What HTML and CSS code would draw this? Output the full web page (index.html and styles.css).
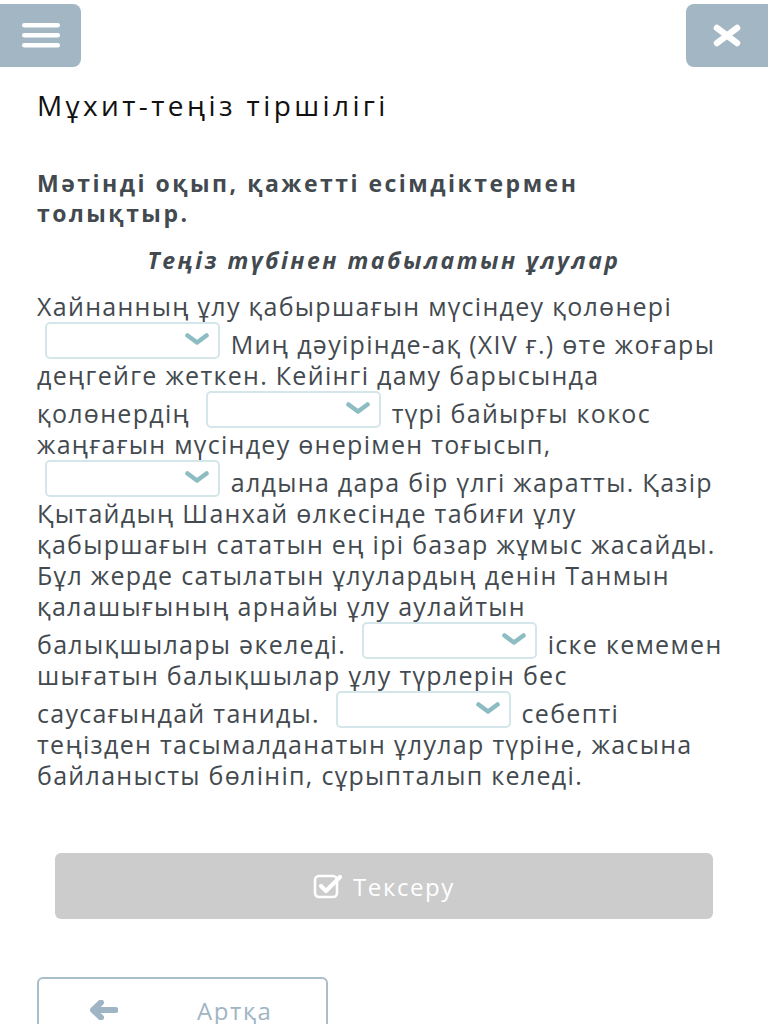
FILE: index.html
```html
<!DOCTYPE html>
<html lang="kk">
<head>
    <meta charset="UTF-8">
    <meta name="viewport" content="width=device-width, initial-scale=1.0">
    <title>Мұхит-теңіз тіршілігі</title>
    <link rel="stylesheet" href="styles.css">
</head>
<body>
    <div class="topbar">
        <button class="icon-btn menu-btn" type="button" aria-label="Мәзір">
            <svg width="38" height="25" viewBox="0 0 38 25">
                <rect x="0" y="0" width="38" height="4.6" rx="2.3" fill="#fff"/>
                <rect x="0" y="10" width="38" height="4.6" rx="2.3" fill="#fff"/>
                <rect x="0" y="20" width="38" height="4.6" rx="2.3" fill="#fff"/>
            </svg>
        </button>
        <button class="icon-btn close-btn" type="button" aria-label="Жабу">
            <svg width="30" height="23" viewBox="0 0 30 23">
                <path d="M5 4 L25 19 M25 4 L5 19" stroke="#fff" stroke-width="6.5" stroke-linecap="round"/>
            </svg>
        </button>
    </div>

    <div class="container">
        <h1 class="title">Мұхит-теңіз тіршілігі</h1>

        <h2 class="task">Мәтінді оқып, қажетті есімдіктермен толықтыр.</h2>

        <h3 class="subtitle">Теңіз түбінен табылатын ұлулар</h3>

        <p class="text">
            Хайнанның ұлу қабыршағын мүсіндеу қолөнері
            <span class="blank"><svg class="chevron" width="26" height="12" viewBox="0 0 26 12"><path d="M3.5 2.5 L13 9.5 L22.5 2.5" fill="none" stroke="#8dbdc3" stroke-width="4.6" stroke-linecap="round" stroke-linejoin="round"/></svg></span>
            Миң дәуірінде-ақ (XIV ғ.) өте жоғары деңгейге жеткен. Кейінгі даму барысында қолөнердің
            <span class="blank"><svg class="chevron" width="26" height="12" viewBox="0 0 26 12"><path d="M3.5 2.5 L13 9.5 L22.5 2.5" fill="none" stroke="#8dbdc3" stroke-width="4.6" stroke-linecap="round" stroke-linejoin="round"/></svg></span>
            түрі байырғы кокос жаңғағын мүсіндеу өнерімен тоғысып,
            <span class="blank"><svg class="chevron" width="26" height="12" viewBox="0 0 26 12"><path d="M3.5 2.5 L13 9.5 L22.5 2.5" fill="none" stroke="#8dbdc3" stroke-width="4.6" stroke-linecap="round" stroke-linejoin="round"/></svg></span>
            алдына дара бір үлгі жаратты. Қазір Қытайдың Шанхай өлкесінде табиғи ұлу қабыршағын сататын ең ірі базар жұмыс жасайды. Бұл жерде сатылатын ұлулардың денін Танмын қалашығының арнайы ұлу аулайтын балықшылары әкеледі.
            <span class="blank"><svg class="chevron" width="26" height="12" viewBox="0 0 26 12"><path d="M3.5 2.5 L13 9.5 L22.5 2.5" fill="none" stroke="#8dbdc3" stroke-width="4.6" stroke-linecap="round" stroke-linejoin="round"/></svg></span>
            іске кемемен шығатын балықшылар ұлу түрлерін бес саусағындай таниды.
            <span class="blank"><svg class="chevron" width="26" height="12" viewBox="0 0 26 12"><path d="M3.5 2.5 L13 9.5 L22.5 2.5" fill="none" stroke="#8dbdc3" stroke-width="4.6" stroke-linecap="round" stroke-linejoin="round"/></svg></span>
            себепті теңізден тасымалданатын ұлулар түріне, жасына байланысты бөлініп, сұрыпталып келеді.
        </p>

        <button class="check-btn" type="button">
            <svg width="30" height="26" viewBox="0 0 30 26">
                <rect x="2" y="3" width="22" height="21" rx="4" fill="none" stroke="#fff" stroke-width="2.6"/>
                <path d="M8 13 L13 18 L27 4" fill="none" stroke="#fff" stroke-width="4.2" stroke-linecap="round" stroke-linejoin="round"/>
            </svg>
            <span>Тексеру</span>
        </button>

        <button class="back-btn" type="button">
            <svg width="28" height="20" viewBox="0 0 28 20">
                <path d="M11 2.5 L3 10 L11 17.5 M4 10 L25.5 10" fill="none" stroke="#a0b5c4" stroke-width="6" stroke-linecap="round" stroke-linejoin="round"/>
            </svg>
            <span>Артқа</span>
        </button>
    </div>
</body>
</html>
```

FILE: styles.css
```css
body {
    font-family: "Open Sans", "Noto Sans", sans-serif;
    background-color: #fff;
    color: #434a4f;
    margin: 0;
    padding: 0;
}
.topbar {
    display: flex;
    justify-content: space-between;
    padding-top: 4px;
}
.icon-btn {
    display: flex;
    align-items: center;
    justify-content: center;
    height: 63px;
    background-color: #a3b6c4;
    border: none;
    padding: 0;
}
.menu-btn {
    width: 81px;
    border-radius: 0 8px 8px 0;
}
.close-btn {
    width: 82px;
    border-radius: 8px 0 0 8px;
}
.container {
    padding: 0 37px;
}
.title {
    font-size: 28px;
    font-weight: 400;
    line-height: 38px;
    letter-spacing: 3.4px;
    color: #111;
    margin: 19px 0 0;
}
.task {
    font-size: 23px;
    font-weight: 700;
    line-height: 30px;
    letter-spacing: 2.5px;
    margin: 44px 0 0;
    max-width: 600px;
}
.subtitle {
    font-size: 23px;
    font-weight: 700;
    font-style: italic;
    line-height: 30px;
    letter-spacing: 2.5px;
    text-align: center;
    margin: 17px 0 0;
}
.text {
    font-size: 25px;
    line-height: 31px;
    letter-spacing: 1.3px;
    margin: 16px 7px 0 0;
}
.blank {
    display: inline-block;
    box-sizing: border-box;
    width: 175px;
    height: 37px;
    margin: 0 3px 0 8px;
    border: 2px solid #d4e6e9;
    border-radius: 5px;
    background: #fff;
    overflow: hidden;
    vertical-align: -5px;
}
.chevron {
    display: block;
    margin: 9px 8px 0 auto;
}
.check-btn {
    display: flex;
    align-items: center;
    justify-content: center;
    gap: 10px;
    width: calc(100% - 36px);
    height: 66px;
    margin: 62px 18px 0;
    background-color: #cccccc;
    color: #fff;
    border: none;
    border-radius: 6px;
    font-family: inherit;
    font-size: 24px;
    letter-spacing: 1.6px;
}
.back-btn {
    display: flex;
    align-items: center;
    width: 291px;
    height: 66px;
    margin-top: 58px;
    padding: 0 0 0 51px;
    background: #fff;
    border: 2px solid #a9bdcb;
    border-radius: 6px;
    color: #a0b5c4;
    font-family: inherit;
    font-size: 24px;
    letter-spacing: 1.6px;
}
.back-btn span {
    margin-left: 79px;
}
```
